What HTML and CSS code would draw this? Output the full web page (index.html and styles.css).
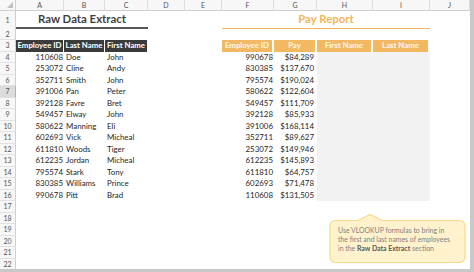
FILE: index.html
```html
<!DOCTYPE html>
<html>
<head>
<meta charset="utf-8">
<link rel="stylesheet" href="styles.css">
</head>
<body>
<div class="sheet">
  <div class="row colhead">
    <div class="corner"></div>
    <div class="ch">A</div><div class="ch">B</div><div class="ch">C</div><div class="ch">D</div><div class="ch">E</div>
    <div class="ch">F</div><div class="ch">G</div><div class="ch">H</div><div class="ch">I</div><div class="ch">J</div>
  </div>
  <div class="row r1">
    <div class="rh">1</div>
    <div class="title-raw">Raw Data Extract</div>
    <div class="title-pay">Pay Report</div>
  </div>
  <div class="row r2"><div class="rh">2</div></div>
  <div class="row r3">
    <div class="rh">3</div>
    <div class="hd dark ca">Employee ID</div>
    <div class="hd dark cb">Last Name</div>
    <div class="hd dark cc">First Name</div>
    <div class="hd orange cf">Employee ID</div>
    <div class="hd orange cg">Pay</div>
    <div class="hd orange ch2">First Name</div>
    <div class="hd orange ci">Last Name</div>
  </div>
  <div class="row rn"><div class="rh">4</div><div class="num ca">110608</div><div class="txt cb">Doe</div><div class="txt cc">John</div><div class="num cf">990678</div><div class="num pay cg">$84,289</div><div class="fill"></div></div>
  <div class="row rn"><div class="rh">5</div><div class="num ca">253072</div><div class="txt cb">Cline</div><div class="txt cc">Andy</div><div class="num cf">830385</div><div class="num pay cg">$137,670</div><div class="fill"></div></div>
  <div class="row rn"><div class="rh">6</div><div class="num ca">352711</div><div class="txt cb">Smith</div><div class="txt cc">John</div><div class="num cf">795574</div><div class="num pay cg">$190,024</div><div class="fill"></div></div>
  <div class="row rn"><div class="rh active">7</div><div class="num ca">391006</div><div class="txt cb">Pan</div><div class="txt cc">Peter</div><div class="num cf">580622</div><div class="num pay cg">$122,604</div><div class="fill"></div></div>
  <div class="row rn"><div class="rh">8</div><div class="num ca">392128</div><div class="txt cb">Favre</div><div class="txt cc">Bret</div><div class="num cf">549457</div><div class="num pay cg">$111,709</div><div class="fill"></div></div>
  <div class="row rn"><div class="rh">9</div><div class="num ca">549457</div><div class="txt cb">Elway</div><div class="txt cc">John</div><div class="num cf">392128</div><div class="num pay cg">$85,933</div><div class="fill"></div></div>
  <div class="row rn"><div class="rh">10</div><div class="num ca">580622</div><div class="txt cb">Manning</div><div class="txt cc">Eli</div><div class="num cf">391006</div><div class="num pay cg">$168,114</div><div class="fill"></div></div>
  <div class="row rn"><div class="rh">11</div><div class="num ca">602693</div><div class="txt cb">Vick</div><div class="txt cc">Micheal</div><div class="num cf">352711</div><div class="num pay cg">$89,627</div><div class="fill"></div></div>
  <div class="row rn"><div class="rh">12</div><div class="num ca">611810</div><div class="txt cb">Woods</div><div class="txt cc">Tiger</div><div class="num cf">253072</div><div class="num pay cg">$149,946</div><div class="fill"></div></div>
  <div class="row rn"><div class="rh">13</div><div class="num ca">612235</div><div class="txt cb">Jordan</div><div class="txt cc">Micheal</div><div class="num cf">612235</div><div class="num pay cg">$145,893</div><div class="fill"></div></div>
  <div class="row rn"><div class="rh">14</div><div class="num ca">795574</div><div class="txt cb">Stark</div><div class="txt cc">Tony</div><div class="num cf">611810</div><div class="num pay cg">$64,757</div><div class="fill"></div></div>
  <div class="row rn"><div class="rh">15</div><div class="num ca">830385</div><div class="txt cb">Williams</div><div class="txt cc">Prince</div><div class="num cf">602693</div><div class="num pay cg">$71,478</div><div class="fill"></div></div>
  <div class="row rn"><div class="rh">16</div><div class="num ca">990678</div><div class="txt cb">Pitt</div><div class="txt cc">Brad</div><div class="num cf">110608</div><div class="num pay cg">$131,505</div><div class="fill"></div></div>
  <div class="row rn"><div class="rh">17</div></div>
  <div class="row rn"><div class="rh">18</div></div>
  <div class="row rn"><div class="rh">19</div></div>
  <div class="row rn"><div class="rh">20</div></div>
  <div class="row rn"><div class="rh">21</div></div>
  <div class="row rn"><div class="rh">22</div></div>

  <div class="callout">
    <svg class="callout-shape" width="140" height="54" viewBox="0 0 140 54">
      <path d="M8 8.5 H30 L42 2.5 L54 8.5 H131 Q137 8.5 137 14.5 V44.5 Q137 50.5 131 50.5 H8 Q2 50.5 2 44.5 V14.5 Q2 8.5 8 8.5 Z" fill="#fff2cc" stroke="#f7d98b" stroke-width="1.2"/>
    </svg>
    <div class="callout-text">Use VLOOKUP formulas to bring in<br>the first and last names of employees<br>in the <b>Raw Data Extract</b> section</div>
  </div>
</div>
</body>
</html>
```

FILE: styles.css
```css
html, body {
  margin: 0;
  padding: 0;
}
body {
  width: 474px;
  height: 272px;
  background: #c8c8c8;
  overflow: hidden;
  font-family: Lato, "Liberation Sans", sans-serif;
}
.sheet {
  position: relative;
  width: 470px;
  height: 268.5px;
  background: #fff;
  overflow: hidden;
}
.row {
  display: grid;
  grid-template-columns: 16px 48px 41px 43px 37px 37px 52px 43px 56px 57px 40px;
  height: 11.5px;
}
.colhead { height: 11px; background: #f7f7f7; }
.r1 { height: 17px; }
.r2 { height: 12px; }
.corner {
  position: relative;
  border-right: 1px solid #cfcfcf;
  border-bottom: 1px solid #cfcfcf;
  box-sizing: border-box;
}
.corner::after {
  content: "";
  position: absolute;
  right: 2px;
  bottom: 2px;
  border-left: 6px solid transparent;
  border-bottom: 6px solid #bdbdbd;
}
.ch {
  font-size: 7px;
  color: #555;
  text-align: center;
  line-height: 10px;
  border-right: 1px solid #dcdcdc;
  border-bottom: 1px solid #cfcfcf;
  box-sizing: border-box;
}
.rh {
  grid-column: 1;
  font-size: 7px;
  color: #555;
  background: #f7f7f7;
  border-right: 1px solid #cfcfcf;
  border-bottom: 1px solid #e2e2e2;
  box-sizing: border-box;
  display: flex;
  align-items: center;
  justify-content: center;
}
.rh.active {
  background: #dcdcdc;
  border-right: 1px solid #9fbfa5;
}
.ca { grid-column: 2; }
.cb { grid-column: 3; }
.cc { grid-column: 4; }
.cf { grid-column: 7; }
.cg { grid-column: 8; }
.ch2 { grid-column: 9; }
.ci { grid-column: 10; }

.title-raw {
  grid-column: 2 / 5;
  font-weight: bold;
  font-size: 11.4px;
  color: #3f3f3f;
  text-align: center;
  line-height: 16px;
  border-bottom: 2px solid #555;
  box-sizing: border-box;
  height: 18px;
}
.title-pay {
  grid-column: 7 / 11;
  font-weight: bold;
  font-size: 11.4px;
  color: #f2b55a;
  text-align: center;
  line-height: 16px;
  border-bottom: 1px solid #f2b55a;
  box-sizing: border-box;
  height: 17.5px;
}
.hd {
  font-weight: bold;
  font-size: 7.8px;
  color: #fff;
  text-align: center;
  line-height: 11.5px;
  white-space: nowrap;
  overflow: hidden;
  box-sizing: border-box;
}
.dark {
  background: #3b3b3b;
  border-right: 1px solid #fff;
}
.orange {
  background: #f2b862;
  border-right: 2px solid #fff;
  color: #fff8ec;
}
.num, .txt {
  font-size: 7.9px;
  color: #262626;
  line-height: 11.5px;
  white-space: nowrap;
}
.num { text-align: right; padding-right: 1px; }
.num.pay { padding-right: 3px; }
.txt { padding-left: 2px; }
.fill {
  grid-column: 9 / 11;
  background: #f2f2f2;
}

.callout {
  position: absolute;
  left: 328px;
  top: 212px;
  width: 140px;
  height: 54px;
}
.callout-shape {
  position: absolute;
  left: 0;
  top: 0;
}
.callout-text {
  position: absolute;
  left: 10px;
  top: 13.5px;
  font-size: 6.9px;
  line-height: 9.3px;
  color: #7f7f7f;
  white-space: nowrap;
}
.callout-text b { color: #595959; }
```
